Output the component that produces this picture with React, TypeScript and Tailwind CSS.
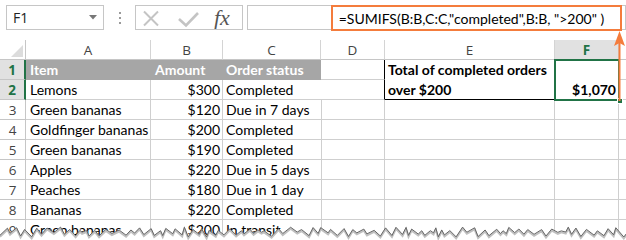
import React from "react";

const GRID = "border-[#cfcfcf]";
const CELLF = "font-['Lato','Liberation_Sans',sans-serif] text-[14px] leading-[20px] text-black";
const UIF = "font-['Open_Sans','Noto_Sans',sans-serif]";

function jag(): [number, number][] {
  let s = 11;
  const rnd = () => {
    s = (s * 9301 + 49297) % 233280;
    return s / 233280;
  };
  const pts: [number, number][] = [];
  let x = 0;
  let up = false;
  while (x <= 632) {
    const y = up ? 227 + rnd() * 4 : 232 + rnd() * 5;
    pts.push([x, y]);
    x += 2 + rnd() * 6;
    up = !up;
  }
  return pts;
}
const PTS = jag();

const rows: [string, string, string][] = [
  ["Lemons", "$300", "Completed"],
  ["Green bananas", "$120", "Due in 7 days"],
  ["Goldfinger bananas", "$200", "Completed"],
  ["Green bananas", "$190", "Completed"],
  ["Apples", "$220", "Due in 5 days"],
  ["Peaches", "$180", "Due in 1 day"],
  ["Bananas", "$220", "Completed"],
  ["Green bananas", "$200", "In transit"],
];

function RowHead({ n, sel }: { n: number; sel?: boolean }) {
  return sel ? (
    <div className={`flex items-center justify-center bg-[#e1e1e1] border-b border-[#c6c6c6] border-r-2 border-r-[#217346] text-[13.5px] font-bold text-[#217346] ${UIF}`}>
      {n}
    </div>
  ) : (
    <div className={`flex items-center justify-center bg-white border-b border-r border-[#c6c6c6] text-[13.5px] text-[#444] ${UIF}`}>
      {n}
    </div>
  );
}

export default function App() {
  const poly = PTS.map((p) => p.join(",")).join(" ");
  const shadow = PTS.map((p) => `${p[0]},${p[1] + 1.5}`).join(" ");
  return (
    <div className="relative w-[626px] h-[240px] overflow-hidden bg-white">
      {/* formula bar */}
      <div className="flex h-[40px] items-start pt-[5px]">
        <div className={`ml-[6px] w-[101px] h-[25px] border border-[#c6c6c6] flex items-center justify-between pl-[6px] pr-[6px] text-[14px] text-[#222] ${UIF}`}>
          <span>F1</span>
          <svg width="8" height="5" viewBox="0 0 8 5">
            <path d="M0 0 L8 0 L4 4.5 Z" fill="#777" />
          </svg>
        </div>
        <div className="ml-[15px] w-[3px] h-[25px] flex flex-col items-center justify-center gap-[3px]">
          <div className="w-[2px] h-[2px] bg-[#9a9a9a]" />
          <div className="w-[2px] h-[2px] bg-[#9a9a9a]" />
          <div className="w-[2px] h-[2px] bg-[#9a9a9a]" />
        </div>
        <div className="ml-[13px] w-[108px] h-[25px] border border-[#c6c6c6] flex items-center">
          <svg width="106" height="23" viewBox="0 0 106 23" className="block">
            <path d="M8 5.5 L22 19.5 M22 5.5 L8 19.5" stroke="#c4c4c4" strokeWidth="2" fill="none" />
            <path d="M43 13 L50 19.5 L62 7" stroke="#c4c4c4" strokeWidth="2.6" fill="none" />
            <text x="78" y="19" fontFamily="'Liberation Serif', serif" fontStyle="italic" fontSize="22" fill="#555">fx</text>
          </svg>
        </div>
        <div className={`ml-[4px] w-[390px] h-[25px] border border-[#c6c6c6] flex items-center pl-[91px] pt-[3px] ${CELLF}`}>
          =SUMIFS(B:B,C:C,"completed",B:B, "&gt;200" )
        </div>
      </div>

      {/* grid */}
      <div className={`grid grid-cols-[26px_125px_72px_98px_64px_170px_64px_1fr] auto-rows-[20px] ${CELLF}`}>
        {/* column headers */}
        <div className="relative bg-white border-r border-b border-[#c6c6c6]">
          <svg width="12" height="12" viewBox="0 0 12 12" className="absolute right-[2px] bottom-[2px]">
            <path d="M12 0 L12 12 L0 12 Z" fill="#dcdcdc" />
          </svg>
        </div>
        {["A", "B", "C", "D", "E"].map((c) => (
          <div key={c} className={`flex items-center justify-center bg-white border-r border-b border-r-[#d4d4d4] border-b-[#c6c6c6] text-[13.5px] text-[#444] ${UIF}`}>
            {c}
          </div>
        ))}
        <div className={`flex items-center justify-center bg-[#e1e1e1] border-r border-b border-r-[#d4d4d4] border-b-[#c6c6c6] text-[13.5px] font-bold text-[#217346] ${UIF}`}>
          F
        </div>
        <div className="bg-white border-b border-[#c6c6c6]" />

        {/* row 1 */}
        <RowHead n={1} sel />
        <div className="bg-[#a6a6a6] pl-[4px] font-bold text-white">Item</div>
        <div className="bg-[#a6a6a6] pl-[4px] font-bold text-white">Amount</div>
        <div className="bg-[#a6a6a6] pl-[3px] font-bold text-white">Order status</div>
        <div className={`border-b border-r ${GRID} border-r-black`} />
        <div className="row-span-2 border-b border-black pl-[3px] font-bold leading-[20px]">
          <div>Total of completed orders</div>
          <div>over $200</div>
        </div>
        <div className="relative row-span-2 flex items-end justify-end pr-[3px] font-bold">
          <span>$1,070</span>
          <div className="absolute left-[-1px] top-[-1px] right-[-1px] bottom-[-1px] border-2 border-[#217346] z-10" />
          <div className="absolute right-[-4px] bottom-[-4px] w-[6px] h-[6px] bg-[#217346] border border-white z-20" />
        </div>
        <div className={`border-b ${GRID}`} />

        {/* data rows */}
        {rows.map((r, i) => {
          const n = i + 2;
          return (
            <React.Fragment key={n}>
              <RowHead n={n} sel={n === 2} />
              <div className={`border-r border-b ${GRID} pl-[4px] whitespace-nowrap`}>{r[0]}</div>
              <div className={`border-r border-b ${GRID} pr-[2px] text-right`}>{r[1]}</div>
              <div className={`border-b ${GRID} pl-[3px] whitespace-nowrap overflow-visible relative z-[1]`}>{r[2]}</div>
              {n === 2 ? (
                <div className={`border-b border-r ${GRID} border-r-black`} />
              ) : (
                <>
                  <div className={`border-l border-r border-b ${GRID}`} />
                  <div className={`border-r border-b ${GRID}`} />
                  <div className={`border-r border-b ${GRID}`} />
                </>
              )}
              <div className={`border-b ${GRID}`} />
            </React.Fragment>
          );
        })}
      </div>

      {/* orange annotation */}
      <div className="absolute left-[331px] top-[5px] w-[291px] h-[26px] border-2 border-[#f47c3c] z-30" />
      <svg className="absolute left-0 top-0 z-30" width="626" height="240" viewBox="0 0 626 240">
        <path d="M619.5 101 L619.5 42" stroke="#f47c3c" strokeWidth="2" fill="none" />
        <path d="M619.5 31 L625 46 L619.5 43 L614 46 Z" fill="#f47c3c" />
      </svg>

      {/* torn edge */}
      <svg className="absolute left-0 top-0 z-40" width="626" height="240" viewBox="0 0 626 240">
        <polygon points={`${poly} 640,245 -5,245`} fill="white" />
        <polyline points={shadow} fill="none" stroke="#c0c0c0" strokeWidth="2" />
        <polyline points={poly} fill="none" stroke="#666" strokeWidth="1" />
      </svg>
    </div>
  );
}
